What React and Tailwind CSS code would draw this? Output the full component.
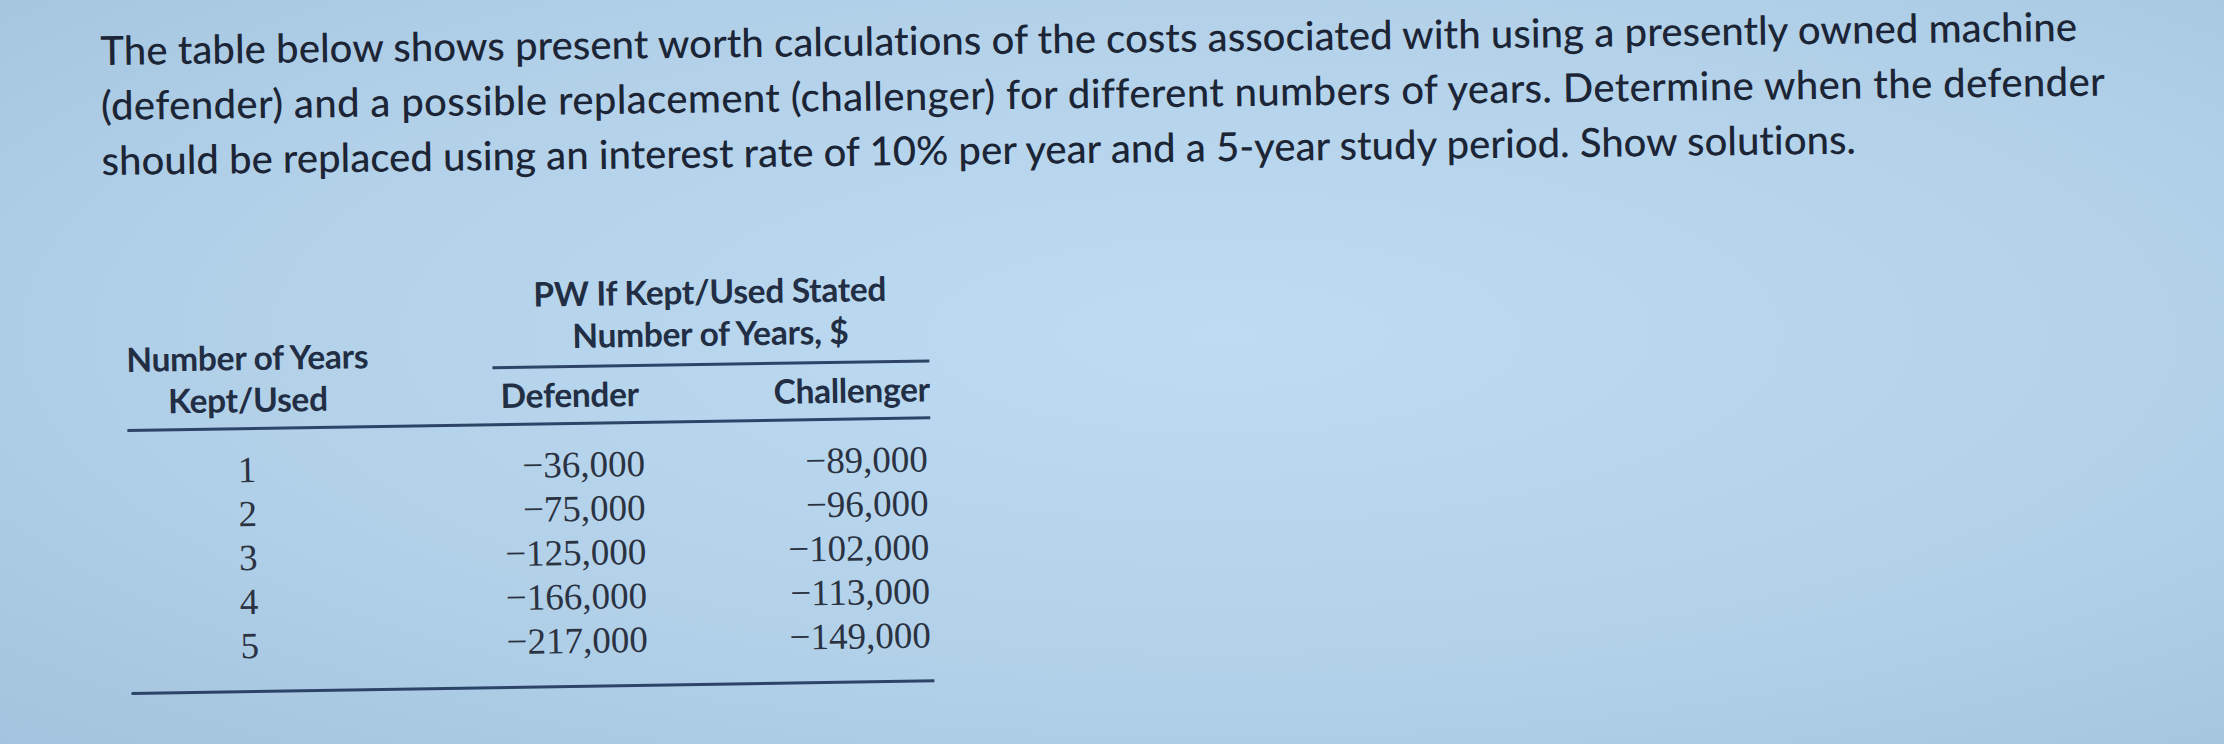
// App.jsx

const rows = [
  { years: 1, defender: "−36,000", challenger: "−89,000" },
  { years: 2, defender: "−75,000", challenger: "−96,000" },
  { years: 3, defender: "−125,000", challenger: "−102,000" },
  { years: 4, defender: "−166,000", challenger: "−113,000" },
  { years: 5, defender: "−217,000", challenger: "−149,000" },
];

function ReplacementTable() {
  return (
    <div className="ml-[125px] mt-[91px] w-[803px] origin-top-left rotate-[-0.9deg] text-[#222e44]">
      {/* header */}
      <div className="flex items-end border-b-[3px] border-[#2c4468] pb-[7px] font-['Lato',sans-serif] text-[33.5px] font-bold leading-[42px]">
        <div className="w-[366px]">
          <div className="w-[242px] text-center tracking-[-0.3px]">
            <div>Number of Years</div>
            <div>Kept/Used</div>
          </div>
        </div>
        <div className="w-[437px]">
          <div className="border-b-[3px] border-[#2c4468] pb-[9px] text-center tracking-[-0.3px]">
            <div>PW If Kept/Used Stated</div>
            <div>Number of Years, $</div>
          </div>
          <div className="flex pt-[5px] tracking-[-0.3px]">
            <div className="w-[151px] pr-[5px] text-right">Defender</div>
            <div className="w-[286px] text-right">Challenger</div>
          </div>
        </div>
      </div>

      {/* body */}
      <div className="border-b-[3px] border-[#2c4468] pb-[22px] pt-[18px] font-['Liberation_Serif',serif] text-[37px] leading-[44px] text-[#2b3242]">
        {rows.map((row) => (
          <div key={row.years} className="flex">
            <div className="w-[366px]">
              <div className="w-[238px] text-center">{row.years}</div>
            </div>
            <div className="w-[151px] text-right">{row.defender}</div>
            <div className="w-[283px] text-right">{row.challenger}</div>
          </div>
        ))}
      </div>
    </div>
  );
}

export default function App() {
  return (
    <div className="h-[744px] w-[2224px] overflow-hidden bg-[radial-gradient(ellipse_at_55%_45%,#bddcf3_0%,#b3d2ea_55%,#a3c3de_100%)] pt-[23px]">
      <p className="ml-[100px] origin-top-left rotate-[-0.7deg] font-['Lato',sans-serif] text-[40px] font-medium leading-[55px] text-[#1c2536]">
        <span className="block tracking-[0.1px]">
          The table below shows present worth calculations of the costs associated with using a presently owned machine
        </span>
        <span className="block tracking-[0.4px]">
          (defender) and a possible replacement (challenger) for different numbers of years. Determine when the defender
        </span>
        <span className="block tracking-[0.05px]">
          should be replaced using an interest rate of 10% per year and a 5-year study period. Show solutions.
        </span>
      </p>
      <ReplacementTable />
    </div>
  );
}
